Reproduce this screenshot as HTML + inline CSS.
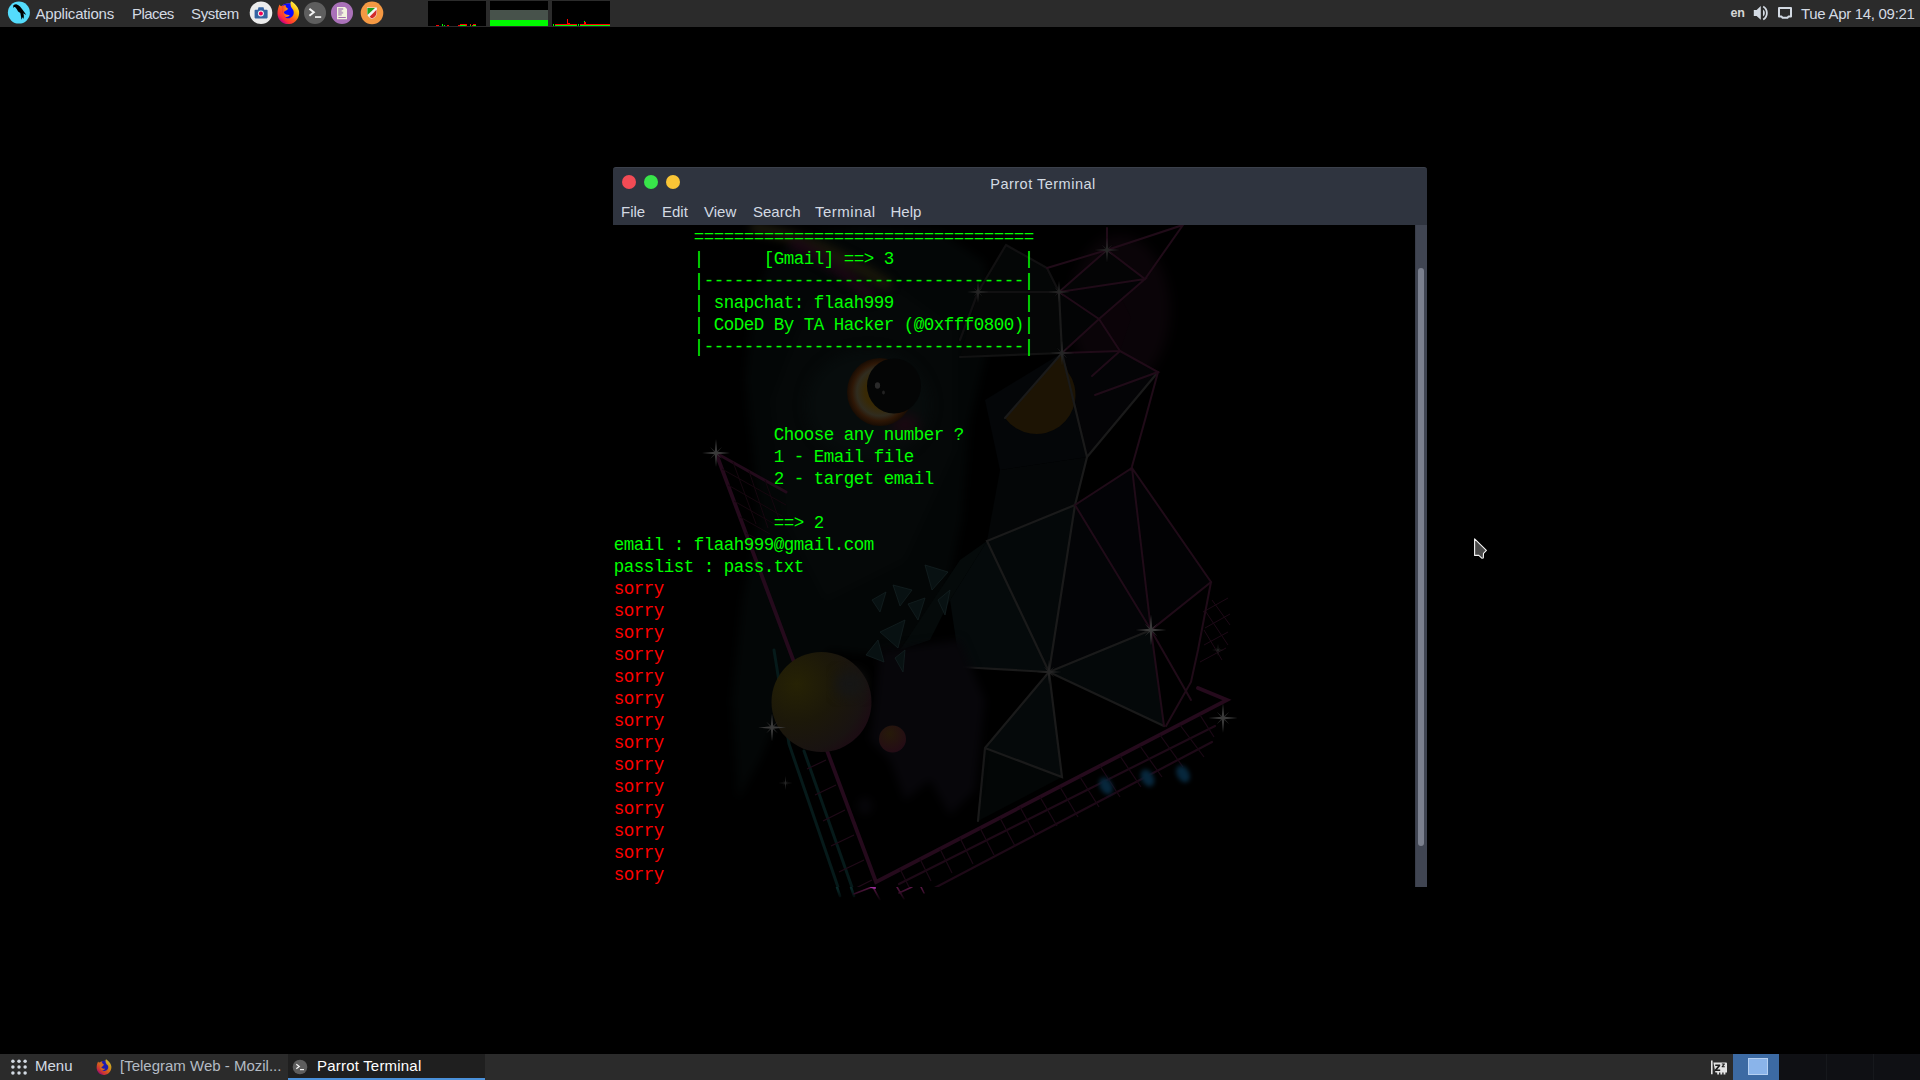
<!DOCTYPE html>
<html>
<head>
<meta charset="utf-8">
<title>Parrot Terminal</title>
<style>
*{margin:0;padding:0;box-sizing:border-box}
html,body{width:1920px;height:1080px;overflow:hidden;background:#000;font-family:"Liberation Sans",sans-serif}
.abs{position:absolute}
#top{position:absolute;left:0;top:0;width:1920px;height:27px;background:#2b2b2b}
#bot{position:absolute;left:0;top:1054px;width:1920px;height:26px;background:#2b2b2b}
.pt{position:absolute;top:0;height:27px;line-height:27px;font-size:15px;color:#d3dae3;white-space:nowrap}
.bt{position:absolute;top:-1px;height:26px;line-height:26px;font-size:15px;color:#d3dae3;white-space:nowrap}
.graph{position:absolute;top:1px;width:58px;height:25px;background:#000;overflow:hidden}
#win{position:absolute;left:613px;top:167px;width:814px;height:720px;background:#000;overflow:hidden}
#title{position:absolute;left:0;top:0;width:814px;height:58px;background:#2f343f;border-top:1px solid #3b404b;border-radius:3px 3px 0 0}
#ttext{position:absolute;left:0;top:0;width:814px;text-align:center;padding-left:46px;height:32px;line-height:32px;font-size:14.5px;letter-spacing:0.5px;color:#d3dae3}
.dot{position:absolute;top:7px;width:14px;height:14px;border-radius:50%}
.mi{position:absolute;top:30px;height:28px;line-height:28px;font-size:15px;color:#d3dae3}
#term{position:absolute;left:0;top:58px;width:802px;height:662px;overflow:hidden}
#txt{position:absolute;left:0.8px;top:1px;font-family:"Liberation Mono",monospace;font-size:17.5px;letter-spacing:-0.502px;line-height:22px;color:#00ff00;white-space:pre}
#txt .r{color:#ff0000}
#sb{position:absolute;left:802px;top:58px;width:12px;height:662px;background:#404552;border-left:1px solid #393d49}
#sl{position:absolute;left:2px;top:43px;width:6px;height:578px;border-radius:3px;background:#7b808e}
</style>
</head>
<body>

<div id="top">
<svg class="abs" style="left:0;top:0" width="400" height="27" viewBox="0 0 400 27">
<defs>
<linearGradient id="ffg" x1="0.85" y1="0.1" x2="0.2" y2="0.9"><stop offset="0" stop-color="#fff44f"/><stop offset="0.3" stop-color="#ffb300"/><stop offset="0.6" stop-color="#ff5a1f"/><stop offset="0.85" stop-color="#ff2a3c"/><stop offset="1" stop-color="#c60084"/></linearGradient>
<linearGradient id="ffh" x1="0" y1="0.5" x2="1" y2="0.3"><stop offset="0" stop-color="#ff3030"/><stop offset="0.6" stop-color="#ff8a10"/><stop offset="1" stop-color="#ffb000"/></linearGradient>
</defs>
<!-- parrot -->
<circle cx="18.9" cy="12.6" r="11" fill="#54dcfc"/>
<path d="M13.2,5.6 L14.6,4.5 L16.2,4.3 L18,5 L20,6.4 L22.4,9.4 L26.2,14.8 L24.8,14.2 L23.4,13.2 L23.9,16 L23.6,18.9 L22.6,17.2 L21.5,19.8 L21,16.5 L20.3,13.1 L18.1,11.5 L16.7,8.9 L15,7 L14.2,6.9 L13.4,8 Z" fill="#000"/>
<!-- screenshot -->
<circle cx="261" cy="12.8" r="11.3" fill="#ececec"/>
<path d="M255.4,9.7 h2.4 l0.7,-2.4 h5 l0.7,2.4 h2.6 a0.8,0.8 0 0 1 0.8,0.8 v7.1 a0.8,0.8 0 0 1 -0.8,0.8 h-11.4 a0.8,0.8 0 0 1 -0.8,-0.8 v-7.1 a0.8,0.8 0 0 1 0.8,-0.8z" fill="#3563a2"/>
<circle cx="260.9" cy="13.4" r="3" fill="#f3f3f3"/>
<circle cx="260.9" cy="13.4" r="2" fill="#f50057"/>
<!-- firefox -->
<g>
<path d="M291.3,1.2 C294.5,3 298,6.5 299,11 C300,17 296,23.6 289,24.1 C282,24.5 277.4,19 277.5,13.5 C277.5,10 278.3,7 279.6,4.4 C280,5.4 280.6,6 281.3,6.3 C283,4.6 286,3.2 290.4,3.3 C290.5,2.6 290.8,1.8 291.3,1.2Z" fill="url(#ffg)"/>
<path d="M282.3,5.4 C284,3.6 287.5,2.9 290.5,3.3 C290.3,5.5 291.2,8 293.2,10 C294.5,13 293.6,16.8 289.5,18.2 C287.6,18.6 286,18 285.2,17.1 C283.5,15.5 282.5,13 282.6,10.5 C282.2,8.8 282.2,7 282.3,5.4Z" fill="#0a0aff"/>
<path d="M281.6,6.4 C282.6,5.6 284.5,5.2 285.8,5.2 C285.5,6 285.8,7 286.5,7.5 C287,8 287.6,8.4 288.2,8.7 C287.4,9.9 286,10.6 284.6,11.2 C284.2,11.8 284,12.3 283.9,12.8 C285.3,14.5 287.6,15.2 289.6,14.9 C289.1,16.2 287.4,17.1 285.3,17.1 C283.3,16.3 282,13.5 282.3,10.8 C281.9,9.4 281.6,8 281.6,6.4Z" fill="url(#ffh)"/>
</g>
<!-- terminal -->
<circle cx="315" cy="12.9" r="11" fill="#5e5e5e"/>
<path d="M309.4,8.7 L313.8,12.2 L309.4,15.7" fill="none" stroke="#f2f2f2" stroke-width="2"/>
<rect x="315" y="16.2" width="6.2" height="1.7" fill="#f2f2f2"/>
<!-- document -->
<circle cx="342" cy="12.9" r="11" fill="#aa71b9"/>
<path d="M337,7 h8 l2,2 v10.2 h-10z" fill="#f2f2de"/>
<path d="M338.2,8 h5 v1.9 h-1.5 v1.9 h1.5 v1.9 h-1.5 v2 h-3.5z" fill="#bfa6c1"/>
<rect x="338.4" y="17" width="7.4" height="0.9" fill="#9a60aa"/>
<!-- shield -->
<circle cx="372" cy="12.9" r="11.3" fill="#f59943"/>
<path d="M367,7.5 h9.9 v5.5 c0,3 -2.5,5 -4.95,6 c-2.45,-1 -4.95,-3 -4.95,-6z" fill="#f4f4f4"/>
<path d="M367.4,7.9 h7.6 l-7.6,7z" fill="#1fa01f"/>
<path d="M376.5,9.8 v3.2 c0,2.6 -2.2,4.4 -4.4,5.4 c-0.9,-0.4 -1.8,-1 -2.5,-1.7z" fill="#d32a2a"/>
</svg>
<svg class="abs" style="left:1750px;top:0" width="50" height="27" viewBox="1750 0 50 27">
<path d="M1753.8,9.9 h2.8 l4.2,-3.8 v13.6 l-4.2,-3.8 h-2.8z" fill="#d3dae3"/>
<path d="M1763,9.6 a4.2,4.2 0 0 1 0,7z" fill="#d3dae3"/>
<path d="M1763.2,6.6 a7.6,7.6 0 0 1 0,13" fill="none" stroke="#d3dae3" stroke-width="1.8"/>
<path d="M1779,8 h12 v8.6 h-2.6 l-1,1.2 h-4.8 l-1,-1.2 h-2.6z" fill="none" stroke="#d3dae3" stroke-width="2" stroke-linejoin="round"/>
</svg>

<div class="pt" style="left:35.5px;letter-spacing:-0.2px">Applications</div>
<div class="pt" style="left:132px;letter-spacing:-0.55px">Places</div>
<div class="pt" style="left:191px;letter-spacing:-0.35px">System</div>
<div class="graph" style="left:428px"><svg width="58" height="25" viewBox="0 0 58 25"><path d="M8,25v-1h3v1z M19,25v-1h2v1z M30,25v-1h2v-1h7v2z M42,25v-2h1v2z M44,25v-1h1v-1h3v2z" fill="#f00"/><path d="M14,25v-2h1v2z M16,25v-1h1v1z M32,25v-1h6v1z M42,25v-1h1v1z M45,25v-1h3v1z" fill="#0f0"/></svg></div>
<div class="graph" style="left:490px"><div class="abs" style="left:0;top:9px;width:58px;height:10px;background:#47524b"></div><div class="abs" style="left:0;top:19px;width:58px;height:6px;background:#00f900"></div></div>
<div class="graph" style="left:552px"><svg width="58" height="25" viewBox="0 0 58 25"><path d="M3,24v-1h5v1z M8,24v-1h17v1z M28,24v-1h30v1z M15,23v-5h1v4h2v1z M32,23v-2h2v2z" fill="#f00"/><path d="M1,25v-2h1v2z M3,25v-1h5v1z M8,25v-1h17v1z M26,25v-2h1v2z M28,25v-1h30v1z M32,21v-1h1v1z" fill="#0f0"/></svg></div>

<div class="pt" style="left:1730.5px;font-size:12.5px;font-weight:bold;color:#d6d6d6;line-height:26px;letter-spacing:-0.3px">en</div>
<div class="pt" style="left:1801px;letter-spacing:-0.3px">Tue Apr 14, 09:21</div>
</div>

<div id="win">

<div id="title">
<div class="dot" style="left:9px;background:#f24b55"></div>
<div class="dot" style="left:31px;background:#38e44a"></div>
<div class="dot" style="left:53px;background:#fac536"></div>
<div id="ttext">Parrot Terminal</div>
<div class="mi" style="left:8px">File</div>
<div class="mi" style="left:49px">Edit</div>
<div class="mi" style="left:91px">View</div>
<div class="mi" style="left:140px">Search</div>
<div class="mi" style="left:202px;letter-spacing:0.5px">Terminal</div>
<div class="mi" style="left:277.5px">Help</div>
</div>
<div id="term">
<svg class="abs" style="left:0;top:0" width="802" height="668" viewBox="613 225 802 668">
<defs>
<filter id="b1" color-interpolation-filters="sRGB" x="-20%" y="-20%" width="140%" height="140%"><feGaussianBlur stdDeviation="0.7"/></filter>
<filter id="b2" color-interpolation-filters="sRGB" x="-20%" y="-20%" width="140%" height="140%"><feGaussianBlur stdDeviation="2"/></filter>
<filter id="b4" color-interpolation-filters="sRGB" x="-30%" y="-30%" width="160%" height="160%"><feGaussianBlur stdDeviation="4"/></filter>
<filter id="b6" color-interpolation-filters="sRGB" x="-30%" y="-30%" width="160%" height="160%"><feGaussianBlur stdDeviation="6"/></filter>
<radialGradient id="sph" cx="0.25" cy="0.32" r="0.85"><stop offset="0" stop-color="#262204"/><stop offset="0.45" stop-color="#1c1809"/><stop offset="0.8" stop-color="#191311"/><stop offset="1" stop-color="#1d0914"/></radialGradient>
<radialGradient id="sph2" cx="0.4" cy="0.3" r="0.8"><stop offset="0" stop-color="#261a09"/><stop offset="1" stop-color="#240a17"/></radialGradient>
<radialGradient id="iris" cx="0.5" cy="0.5" r="0.5"><stop offset="0.45" stop-color="#382905"/><stop offset="0.7" stop-color="#302c1f"/><stop offset="0.85" stop-color="#2e1706"/><stop offset="1" stop-color="#180c03"/></radialGradient>
<g id="star"><path d="M-14,0 L-1.2,-1.2 L0,-14 L1.2,-1.2 L14,0 L1.2,1.2 L0,14 L-1.2,1.2Z"/><path d="M-6,-6 L0,-1 L6,-6 L1,0 L6,6 L0,1 L-6,6 L-1,0Z" opacity="0.7"/></g>
</defs>
<!-- owl organic body (left) -->
<g filter="url(#b4)">
<path d="M770,258 L800,236 L860,226 L940,232 L985,262 L992,330 L970,420 L962,520 L945,600 L905,650 L870,655 L830,650 L790,690 L760,760 L738,800 L732,700 L742,600 L760,520 L752,440 L745,380 L752,310Z" fill="#030606"/>
<path d="M810,300 L900,290 L955,330 L955,450 L905,560 L825,600 L785,520 L772,400Z" fill="#050808"/>
</g>
<!-- brush bands on head -->
<g filter="url(#b4)" fill="none" stroke-linecap="round">
<path d="M756,228 Q820,240 886,284" stroke="#18160a" stroke-width="12"/>
<path d="M795,244 Q835,262 870,296" stroke="#180712" stroke-width="12"/>
</g>
<!-- pink neon triangle -->
<g fill="none" stroke-linecap="round" filter="url(#b1)">
<path d="M716,453 L786,492" stroke="#230a1b" stroke-width="3"/>
<path d="M716,453 L876,882 L1227,700 L1198,688" stroke="#250a1c" stroke-width="3.8"/>
<path d="M774,650 L789,744 L840,893 M804,751 L854,893" stroke="#061a1a" stroke-width="3"/>
<path d="M899,884 L1215,726 M925,893 L1212,742" stroke="#1e0917" stroke-width="2.2"/>
</g>
<g stroke="#200a18" stroke-width="1.2">
<path d="M826,760 L807,769 M836,785 L815,795 M845,810 L823,821 M854,835 L831,846 M864,860 L839,872 M872,880 L846,893"/>
</g>
<g stroke="#1b0815" stroke-width="1.2">
<path d="M900,869 L910,889 M920,859 L931,881 M940,849 L952,873 M960,838 L973,864 M980,828 L994,855 M1000,818 L1015,846 M1020,807 L1036,836 M1040,797 L1057,826 M1060,787 L1078,817 M1080,777 L1099,807 M1100,766 L1120,797 M1120,756 L1141,787 M1140,746 L1162,777 M1160,735 L1183,767 M1180,725 L1204,757 M1200,715 L1214,737"/>
</g>
<g stroke="#16070f" stroke-width="1" fill="none">
<path d="M722,469 L786,505 M728,485 L782,516 M734,501 L776,525 M740,517 L770,534 M746,533 L764,543"/>
<path d="M733,462 L756,524 M749,471 L768,528 M765,480 L780,522"/>
</g>
<g stroke="#1d0916" stroke-width="1" fill="none">
<path d="M1203,612 L1228,598 M1205,628 L1230,614 M1204,645 L1228,632 M1200,662 L1226,648"/>
<path d="M1212,600 L1230,625 M1206,612 L1228,645 M1204,630 L1222,660"/>
</g>
<g filter="url(#b6)"><ellipse cx="868" cy="405" rx="62" ry="55" fill="#070c0c"/><ellipse cx="1120" cy="310" rx="50" ry="75" fill="#0a0408"/><ellipse cx="905" cy="425" rx="14" ry="10" fill="#1a0810"/></g>
<!-- polygon fills (right) -->
<g filter="url(#b1)">
<path d="M987,541 L1075,505 L1049,672Z" fill="#040809"/>
<path d="M987,541 L1049,672 L960,667 L950,600Z" fill="#050a0b"/>
<path d="M1075,505 L1151,630 L1049,672Z" fill="#030406"/>
<path d="M1049,672 L1151,630 L1164,726Z" fill="#040809"/>
<path d="M1049,672 L985,748 L1062,777Z" fill="#05090a"/>
<path d="M985,748 L978,821 L1062,777Z" fill="#030606"/>
<path d="M1075,505 L1132,468 L1151,630Z" fill="#030306"/>
<path d="M1132,468 L1211,582 L1151,630Z" fill="#020204"/>
<path d="M1087,457 L1075,505 L987,541 L1000,470Z" fill="#040607"/>
<path d="M1062,353 L1087,457 L1000,470 L985,400Z" fill="#040608"/>
<path d="M1062,353 L1120,351 L1158,372 L1087,457Z" fill="#040406"/>
<path d="M1059,292 L1099,319 L1062,353Z" fill="#030405"/>
<path d="M1059,292 L1107,250 L1145,279Z" fill="#040405"/>
<path d="M1059,292 L1145,279 L1099,319Z" fill="#030305"/>
<path d="M978,292 L1059,292 L1062,353 L960,356Z" fill="#050606"/>
<path d="M1006,245 L1047,268 L1059,292 L978,292Z" fill="#040606"/>
<path d="M1099,319 L1122,299 L1131,318 L1120,351Z" fill="#0b0308"/>
<path d="M960,560 L987,541 L950,600 L930,640 L900,650Z" fill="#050a0a"/>
</g>
<!-- yellow half-circle behind polygons -->
<path d="M1062,353 L1068,372 A36,36 0 0 1 1005,418Z" fill="#1d1404"/>
<!-- eye -->
<g>
<ellipse cx="880" cy="392" rx="33" ry="34" fill="url(#iris)"/>
<ellipse cx="894" cy="386" rx="27" ry="27.5" fill="#040505"/>
<ellipse cx="877.5" cy="385.5" rx="2.6" ry="3.2" fill="#2a2a2a"/>
<ellipse cx="883.5" cy="392.5" rx="1.4" ry="2" fill="#222"/>
</g>
<!-- polygon wire lines: grey -->
<g stroke="#1a1a1a" stroke-width="2.2" fill="none" stroke-linecap="round" filter="url(#b1)">
<path d="M987,541 L1075,505 L1049,672 Z"/>
<path d="M1049,672 L1151,630 M1049,672 L960,667 M1049,672 L985,748 L978,821 M1049,672 L1062,777 L985,748 M1049,672 L1164,726"/>
<path d="M1087,457 L1075,505 M1087,457 L1062,353 M1087,457 L1158,372"/>
<path d="M1062,353 L960,357" stroke="#121212"/><path d="M1062,353 L1059,292 M1062,353 L1005,418"/>
<path d="M978,292 L1059,292 M1059,292 L1047,268 L1006,245 M978,292 L1006,245 M978,292 L960,340" stroke="#111011"/>
</g>
<!-- polygon wire lines: pink -->
<g stroke="#200b18" stroke-width="2" fill="none" stroke-linecap="round" filter="url(#b1)">
<path d="M1107,250 L1145,279 L1183,225 L1107,250 L1107,228"/>
<path d="M1107,250 L1059,292 L1145,279 L1099,319 L1059,292"/>
<path d="M1107,250 L1047,268"/>
<path d="M1099,319 L1062,353 L1120,351 L1099,319"/>
<path d="M1120,351 L1158,372 L1095,395 M1120,351 L1092,376"/>
<path d="M1158,372 L1145,420 L1131,470"/>
<path d="M1132,468 L1211,582 L1151,630 L1132,468 L1075,505 L1151,630"/>
<path d="M1211,582 L1198,650 L1191,682 L1166,726 M1151,630 L1164,726 M1151,630 L1191,700"/>
</g>
<!-- paint drips -->
<g fill="#07060a" filter="url(#b4)">
<path d="M880,650 L960,640 L985,700 L975,790 L950,815 L930,780 L905,800 L890,760 L870,740 L875,700Z"/><ellipse cx="865" cy="806" rx="7" ry="8"/>
</g>
<!-- spheres -->
<circle cx="821.5" cy="702" r="50" fill="url(#sph)"/>
<ellipse cx="850" cy="684" rx="15" ry="14" fill="#161615" filter="url(#b6)"/>
<circle cx="892.5" cy="739" r="13.5" fill="url(#sph2)"/>
<!-- small crystal shards -->
<g fill="#081112" stroke="#162224" stroke-width="0.7">
<path d="M872,600 L886,592 L880,612Z M893,585 L912,590 L900,606Z M925,565 L948,572 L932,590Z M880,632 L905,620 L898,648Z M908,604 L925,598 L918,620Z M866,655 L878,640 L884,662Z M938,600 L950,590 L945,615Z M895,658 L905,650 L903,672Z"/>
</g>
<!-- blue blobs -->
<g filter="url(#b2)" fill="#07273c">
<ellipse cx="1106" cy="786" rx="6" ry="9" transform="rotate(-30 1106 786)"/>
<ellipse cx="1147.5" cy="778" rx="6" ry="9" transform="rotate(-30 1147.5 778)"/>
<ellipse cx="1183" cy="774" rx="6" ry="9" transform="rotate(-30 1183 774)"/>
</g>
<!-- sparkles -->
<g fill="#3a3a3a">
<use href="#star" transform="translate(716,453)"/>
<use href="#star" transform="translate(1223,718) scale(1.05)"/>
<use href="#star" transform="translate(1151,630) scale(1.1)"/>
<use href="#star" transform="translate(772,727.5) scale(1.0)"/>
</g>
<g fill="#262626">
<use href="#star" transform="translate(1107,250) scale(0.9)"/>
<use href="#star" transform="translate(1059,292) scale(0.8)"/>
<use href="#star" transform="translate(1062,353) scale(0.9)"/>
<use href="#star" transform="translate(978,292) scale(0.8)"/>
<use href="#star" transform="translate(1049,672) scale(0.9)"/>
<use href="#star" transform="translate(785.5,783) scale(0.5)"/>
<use href="#star" transform="translate(1218,650) scale(0.45)"/>
</g>
</svg>

<pre id="txt">        ==================================
        |      [Gmail] ==&gt; 3             |
        |--------------------------------|
        | snapchat: flaah999             |
        | CoDeD By TA Hacker (@0xfff0800)|
        |--------------------------------|



                Choose any number ?
                1 - Email file
                2 - target email

                ==&gt; 2
email : flaah999@gmail.com
passlist : pass.txt
<span class="r">sorry
sorry
sorry
sorry
sorry
sorry
sorry
sorry
sorry
sorry
sorry
sorry
sorry
sorry</span></pre>
</div>
<div id="sb"><div id="sl"></div></div>
</div>

<div id="bot">
<svg class="abs" style="left:0;top:0" width="320" height="26" viewBox="0 0 320 26">
<g fill="#d3dae3">
<circle cx="12.9" cy="7.2" r="1.75"/><circle cx="19" cy="7.2" r="1.75"/><circle cx="25.1" cy="7.2" r="1.75"/>
<circle cx="12.9" cy="13.1" r="1.75"/><circle cx="19" cy="13.1" r="1.75"/><circle cx="25.1" cy="13.1" r="1.75"/>
<circle cx="12.9" cy="19" r="1.75"/><circle cx="19" cy="19" r="1.75"/><circle cx="25.1" cy="19" r="1.75"/>
</g>
<defs>
<linearGradient id="ffg2" x1="0.85" y1="0.1" x2="0.2" y2="0.9"><stop offset="0" stop-color="#c9b93c"/><stop offset="0.3" stop-color="#cf9016"/><stop offset="0.6" stop-color="#d4581f"/><stop offset="0.85" stop-color="#cc3038"/><stop offset="1" stop-color="#9a1070"/></linearGradient>
</defs>
<g transform="translate(104,13.3) scale(0.68) translate(-288.3,-12.9)">
<path d="M291.3,1.2 C294.5,3 298,6.5 299,11 C300,17 296,23.6 289,24.1 C282,24.5 277.4,19 277.5,13.5 C277.5,10 278.3,7 279.6,4.4 C280,5.4 280.6,6 281.3,6.3 C283,4.6 286,3.2 290.4,3.3 C290.5,2.6 290.8,1.8 291.3,1.2Z" fill="url(#ffg2)"/>
<path d="M282.5,6.2 C284.5,3.8 288.5,3 290.6,3.4 C290.2,6 291.5,8.6 294,10.4 C295.5,13.5 294,17.6 289.6,18.3 C287.5,18.5 286,17.9 285.4,17.2 C287.5,17.3 289,16.3 289.6,15 C288,15.6 285.5,15 284,13 C285.2,12 286.7,11 287.9,8.9 C286.8,8.8 286,8 285.8,7.2 C285,6 283.5,5.6 282.5,6.2Z" fill="#1c1cb0"/>
<path d="M281.4,6.2 C282.5,5.2 284.8,5 285.7,5.4 C285.3,6 285.4,6.8 286,7.4 C286.6,8 287.4,8.4 288.2,8.6 C287,10.6 285.6,11.6 284,12.8 C285.5,14.8 288,15.4 289.6,14.9 C289,16.3 287.5,17.3 285.4,17.2 C283,16 282,13 282.5,10.5 C282,9 281.6,7.4 281.4,6.2Z" fill="#d06a20"/>
</g>
</svg>

<div class="bt" style="left:35px">Menu</div>
<div class="bt" style="left:120px;color:#b4bbc4">[Telegram Web - Mozil...</div>
<div class="abs" style="left:288px;top:0;width:197px;height:26px;background:#1f1f1f;border-bottom:2px solid #4a90d9"></div>
<div class="bt" style="left:317px;color:#fff;letter-spacing:0.2px">Parrot Terminal</div>
<svg class="abs" style="left:288px;top:0" width="30" height="26" viewBox="288 0 30 26">
<circle cx="300" cy="13" r="7.3" fill="#5e5e5e"/>
<path d="M296.3,10.3 L299.2,12.5 L296.3,14.7" fill="none" stroke="#f2f2f2" stroke-width="1.3"/>
<rect x="300" y="15" width="4" height="1.2" fill="#f2f2f2"/>
</svg>
<svg class="abs" style="left:1700px;top:1px" width="34" height="26" viewBox="1700 0 34 26">
<path d="M1711,5.5 h1.6 v13.8 h-1.6z" fill="#e3e3e3"/>
<path d="M1713.4,7.6 h12.6 a1,1 0 0 1 1,1 v9 h-1.6 v2 h-1.8 v-2 h-1.4 v2 h-1.8 v-2 h-1.4 v2 h-1.8 v-2 h-1.8z" fill="#e3e3e3"/>
<path d="M1715.2,9.6 h5 v1.4 l-3,3.4 h3 v1.5 h-5.2 v-1.4 l3,-3.4 h-2.8z" fill="#1d1d1d"/>
<path d="M1721.8,8.6 h3 v0.9 l-1.7,1.8 h1.7 v0.9 h-3.1 v-0.9 l1.7,-1.8 h-1.6z" fill="#1d1d1d"/>
</svg>

<div class="abs" style="left:1733px;top:0;width:46px;height:26px;background:#3c6aa3"></div>
<div class="abs" style="left:1748px;top:4px;width:20px;height:17px;background:#8ab4ea;border:1px solid #b5d0f2"></div>
<div class="abs" style="left:1779px;top:0;width:141px;height:26px;background:#0f1014"></div>
<div class="abs" style="left:1826px;top:0;width:1px;height:26px;background:#16181c"></div>
<div class="abs" style="left:1873px;top:0;width:1px;height:26px;background:#16181c"></div>
</div>
<svg class="abs" style="left:820px;top:887px" width="200" height="14" viewBox="820 887 200 14">
<defs><linearGradient id="sg" x1="0" y1="0" x2="0" y2="1"><stop offset="0" stop-color="#fff"/><stop offset="1" stop-color="#000"/></linearGradient><mask id="sm"><rect x="820" y="887" width="200" height="14" fill="url(#sg)"/></mask></defs>
<g mask="url(#sm)" fill="none" stroke-linecap="round">
<path d="M837,887 L840,896 M851,887 L854,896" stroke="#0a2c2c" stroke-width="2.5"/>
<path d="M854,894 L872,887 M873,887 L880,900 M897,887 L904,899 M899,893 L912,887 M921,887 L924,893" stroke="#5a1846" stroke-width="1.6"/>
<path d="M871,887 L875,888" stroke="#a030a0" stroke-width="2"/>
</g></svg>
<svg class="abs" style="left:1468px;top:532px" width="26" height="32" viewBox="1468 532 26 32">
<path d="M1474.6,538.8 L1474.6,555.4 L1478.8,555.4 L1481.8,558.2 L1483.3,558 L1483.5,553.3 L1486.4,550.3 Z" fill="#4a4a4a" stroke="#f4f4f4" stroke-width="1.1" stroke-linejoin="round"/>
</svg>

</body>
</html>
